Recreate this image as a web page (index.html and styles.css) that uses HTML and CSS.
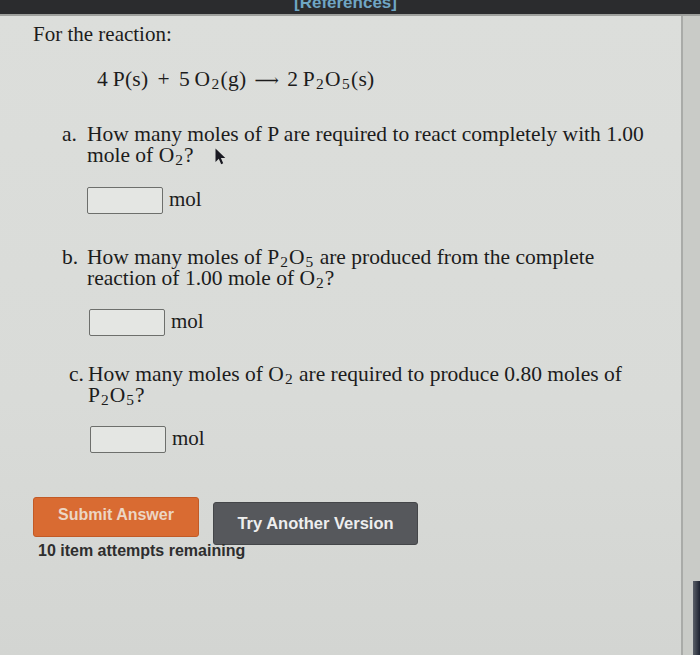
FILE: index.html
```html
<!DOCTYPE html>
<html>
<head>
<meta charset="utf-8">
<link rel="stylesheet" href="styles.css">
</head>
<body>
<div class="topbar"><span class="refs">[References]</span></div>
<div class="screen">
  <div class="page">
    <p class="intro">For the reaction:</p>
    <p class="eq">4&#8201;P(s)<span class="op">+</span>5&#8201;O<sub>2</sub>(g)<span class="arrow">&#10230;</span>2&#8201;P<sub>2</sub>O<sub>5</sub>(s)</p>

    <div class="q qa">
      <span class="lbl">a.</span>
      <span class="qtext">How many moles of P are required to react completely with 1.00 mole of O<sub>2</sub>?<svg class="cursor" width="11" height="17" viewBox="0 0 11 17"><path d="M0.5 0.5 L0.5 14 L3.8 10.8 L6.2 16.2 L8.2 15.3 L5.9 10 L10.3 10 Z" fill="#1a1a22"/></svg></span>
    </div>
    <div class="ans ansa"><span class="box"></span><span class="unit">mol</span></div>

    <div class="q qb">
      <span class="lbl">b.</span>
      <span class="qtext">How many moles of P<sub>2</sub>O<sub>5</sub> are produced from the complete reaction of 1.00 mole of O<sub>2</sub>?</span>
    </div>
    <div class="ans ansb"><span class="box"></span><span class="unit">mol</span></div>

    <div class="q qc">
      <span class="lbl">c.</span>
      <span class="qtext">How many moles of O<sub>2</sub> are required to produce 0.80 moles of P<sub>2</sub>O<sub>5</sub>?</span>
    </div>
    <div class="ans ansc"><span class="box"></span><span class="unit">mol</span></div>

    <div class="buttons">
      <button class="btn submit">Submit Answer</button>
      <button class="btn another">Try Another Version</button>
    </div>
    <p class="attempts">10 item attempts remaining</p>
  </div>
  <div class="edge"><div class="edge-dark"></div></div>
</div>
</body>
</html>
```
FILE: styles.css
```css
html, body {
  margin: 0;
  padding: 0;
}
body {
  width: 700px;
  height: 655px;
  overflow: hidden;
  background: #d6d8d5;
  font-family: "Liberation Serif", "Times New Roman", serif;
  color: #1c1c1c;
}
.topbar {
  height: 14px;
  background: #2b2c2e;
  border-bottom: 2px solid #9ea09d;
  position: relative;
  overflow: hidden;
}
.refs {
  position: absolute;
  left: 294px;
  top: -7px;
  font-family: "Liberation Sans", Arial, sans-serif;
  font-weight: bold;
  font-size: 17px;
  line-height: 20px;
  color: #6fa6c4;
}
.screen {
  display: flex;
  height: 639px;
}
.page {
  width: 683px;
  background: linear-gradient(180deg, #dcdedb 0%, #d9dbd8 60%, #d3d5d2 100%);
  border-right: 2px solid #a9aba8;
  padding-left: 33px;
  box-sizing: border-box;
}
.edge {
  flex: 1;
  background: #c9cbc7;
  position: relative;
}
.edge-dark {
  position: absolute;
  right: 0;
  top: 565px;
  bottom: 0;
  width: 7px;
  background: linear-gradient(90deg, #5a5f68, #1d2230);
}
p { margin: 0; }
sub {
  font-size: 0.72em;
  vertical-align: -0.2em;
  line-height: 0;
  margin: 0 1px;
}
.intro {
  font-size: 21px;
  margin-top: 6px;
  line-height: 24px;
}
.eq {
  font-size: 21.5px;
  line-height: 24px;
  margin-top: 21px;
  margin-left: 64px;
  letter-spacing: 0.3px;
}
.op {
  margin: 0 9px;
}
.arrow {
  margin: 0 8px;
  font-family: "DejaVu Serif", serif;
  font-size: 17px;
}
.q {
  display: flex;
  font-size: 21.5px;
  line-height: 21px;
}
.lbl {
  width: 25px;
  flex: none;
}
.qtext {
  width: 560px;
}
.qa { margin-top: 32px; margin-left: 29px; }
.qb { margin-top: 33px; margin-left: 29px; }
.qc { margin-top: 28px; margin-left: 36px; }
.qc .lbl { width: 19px; }
.cursor {
  margin-left: 22px;
  vertical-align: -3px;
}
.ans {
  display: flex;
  align-items: center;
  margin-left: 54px;
}
.ansa { margin-top: 21px; }
.ansb { margin-top: 20px; margin-left: 56px; }
.ansc { margin-top: 20px; margin-left: 57px; }
.box {
  width: 74px;
  height: 25px;
  border: 1.5px solid #6d6f6c;
  border-radius: 2px;
  background: #e4e6e3;
}
.unit {
  font-size: 21px;
  margin-left: 6px;
  margin-top: -2px;
}
.buttons {
  display: flex;
  align-items: flex-start;
  gap: 14px;
  margin-top: 44px;
}
.btn {
  font-family: "Liberation Sans", Arial, sans-serif;
  font-weight: bold;
  border: none;
  border-radius: 3px;
  padding: 0;
}
.submit {
  width: 166px;
  height: 40px;
  background: #d96b32;
  color: #ecd6c4;
  font-size: 16px;
  border: 1px solid #c25a26;
  padding-bottom: 4px;
}
.another {
  width: 205px;
  height: 43px;
  margin-top: 5px;
  background: #56585c;
  color: #eeeeee;
  font-size: 16.5px;
  border: 1px solid #444649;
}
.attempts {
  font-family: "Liberation Sans", Arial, sans-serif;
  font-weight: bold;
  font-size: 16px;
  color: #2e2e2e;
  margin-top: -3px;
  margin-left: 5px;
}
```
